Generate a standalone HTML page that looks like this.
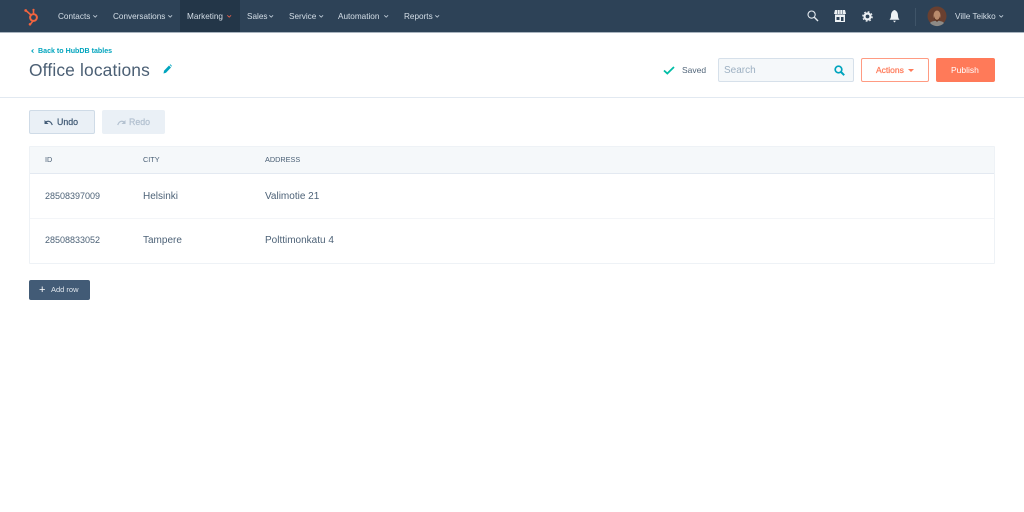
<!DOCTYPE html>
<html lang="en"><head><meta charset="utf-8"><title>Office locations</title>
<style>
html,body{margin:0;padding:0;background:#fff}
body{width:1024px;height:512px;overflow:hidden;position:relative;font-family:"Liberation Sans",sans-serif}
.a{position:absolute;box-sizing:border-box}
.t{position:absolute;white-space:nowrap;line-height:14px;filter:blur(.3px)}
.n{color:#d5dfe8;font-size:8.2px;top:9.5px}
.h{color:#4a5f75;font-size:7.3px;top:153px}
.d{color:#4d6277;font-size:10px;}
.b{-webkit-text-stroke:.25px currentColor}
svg{position:absolute;overflow:visible}
.c{top:15.3px;fill:none;stroke:#c3cfdb;stroke-width:.8}
</style></head><body>
<div class="a" style="left:0;top:0;width:1024px;height:33px;background:#2d4257;border-bottom:1px solid #a9b4bf"></div>
<div class="a" style="left:180px;top:0;width:60px;height:32px;background:#233648"></div>

<svg style="left:23px;top:8px" width="18" height="18" viewBox="0 0 18 18" fill="none" stroke="#f2643f">
<circle cx="10.5" cy="9.5" r="3.4" stroke-width="2"/><path d="M8 7 3.5 3M10.5 6V2.5M10 13l-2.5 3" stroke-width="1.6"/><circle cx="2.7" cy="2.5" r="1.4" fill="#f2643f" stroke="none"/><circle cx="10.5" cy="1.8" r="1.1" fill="#f2643f" stroke="none"/><circle cx="7" cy="16.3" r="1.3" fill="#f2643f" stroke="none"/>
</svg>

<div class="t n" style="left:58px">Contacts</div><svg class="c" style="left:93px" width="5" height="3"><path d="M.3.3 2.2 2.200 4.100.3"/></svg>
<div class="t n" style="left:113px">Conversations</div><svg class="c" style="left:168px" width="5" height="3"><path d="M.3.3 2.200 2.200 4.100.3"/></svg>
<div class="t n" style="left:187px">Marketing</div><svg class="c" style="left:227px;stroke:#e8604c" width="5" height="3"><path d="M.3.3 2.200 2.200 4.100.3"/></svg>
<div class="t n" style="left:247px">Sales</div><svg class="c" style="left:268.500px" width="5" height="3"><path d="M.3.3 2.200 2.200 4.100.3"/></svg>
<div class="t n" style="left:289px">Service</div><svg class="c" style="left:318.500px" width="5" height="3"><path d="M.3.3 2.200 2.200 4.100.3"/></svg>
<div class="t n" style="left:338px">Automation</div><svg class="c" style="left:384px" width="5" height="3"><path d="M.3.3 2.200 2.200 4.100.3"/></svg>
<div class="t n" style="left:404px">Reports</div><svg class="c" style="left:435px" width="5" height="3"><path d="M.3.3 2.200 2.200 4.100.3"/></svg>

<svg style="left:807px;top:10px" width="12" height="12" viewBox="0 0 12 12" fill="none" stroke="#e3e9ef" stroke-width="1.1"><circle cx="4.600" cy="4.600" r="3.600"/><path d="M7.300 7.300 11 11" stroke-width="1.400"/></svg>
<svg style="left:834px;top:10px" width="12" height="12" viewBox="0 0 12 12"><path d="M1 0h10l1 4H0z" fill="#eef2f5"/><path d="M1 4.500h10V12H1z" fill="#eef2f5"/><path d="M2.500 7h3v3h-3z" fill="#2d4257"/><path d="M7 7h2.500v4H7z" fill="#2d4257"/><path d="M3.500 0v4M6 0v4M8.500 0v4" stroke="#2d4257" stroke-width=".5"/></svg>
<svg style="left:862px;top:11px" width="11" height="11" viewBox="0 0 11 11" fill="none" stroke="#eef2f5"><circle cx="5.500" cy="5.500" r="3" stroke-width="2.200"/><circle cx="5.500" cy="5.500" r="4.700" stroke-width="1.200" stroke-dasharray="1.800 1.900"/></svg>
<svg style="left:889px;top:10px" width="11" height="13" viewBox="0 0 11 13"><path d="M5.500 0C3 1 2 3 2 5.500 2 7.500 1.500 8.500 0.500 9.800h10C9.500 8.500 9 7.500 9 5.500 9 3 8 1 5.500 0z" fill="#eef2f5"/><path d="M4 10.800h3L5.500 12.500z" fill="#eef2f5"/></svg>
<div class="a" style="left:915px;top:8px;width:1px;height:18px;background:#3f5468"></div>
<svg style="left:927px;top:6px" width="20" height="20" viewBox="0 0 20 20"><circle cx="10" cy="10" r="9.500" fill="#6a4030"/><path d="M3 17c2-3 12-3 14 0a9.500 9.500 0 0 1-14 0z" fill="#8d8a86"/><ellipse cx="10" cy="9.500" rx="3.500" ry="5" fill="#b98a6c"/><path d="M7 10c1 5 5 5 6 0l0 3-3 3-3-3z" fill="#5a3322"/></svg>
<div class="t n" style="left:955px">Ville Teikko</div><svg class="c" style="left:999px" width="5" height="3"><path d="M.3.3 2.200 2.200 4.100.3"/></svg>

<svg style="left:30.500px;top:48.500px;fill:none;stroke:#00a4bd;stroke-width:1" width="3" height="4"><path d="M2.500.3.800 2 2.500 3.700"/></svg>
<div class="t" style="left:38px;top:44px;color:#00a4bd;font-size:7.100px;font-weight:bold">Back to HubDB tables</div>
<div class="t" style="left:29px;top:60px;line-height:20px;color:#4b5f74;font-size:17.400px;letter-spacing:.15px">Office locations</div>
<svg style="left:163px;top:64px" width="9" height="10" viewBox="0 0 9 10"><path d="M0.500 9.500 1 6.800 6 1.500 8 3.500 3 8.800z" fill="#00a4bd"/><path d="M6.700.8 7.300.3 8.800 1.800 8.400 2.800z" fill="#00a4bd"/></svg>

<svg style="left:663px;top:66px" width="12" height="9" viewBox="0 0 12 9" fill="none" stroke="#00bda5" stroke-width="1.800"><path d="M1 4.500 4.300 7.500 11 1"/></svg>
<div class="t" style="left:682px;top:62.500px;color:#52667a;font-size:8.500px">Saved</div>
<div class="a" style="left:718px;top:58px;width:136px;height:24px;background:#f5f8fa;border:1px solid #d6e0ea;border-radius:2px"></div>
<div class="t" style="left:724px;top:63.500px;color:#9db0c2;font-size:10px">Search</div>
<svg style="left:834px;top:65px" width="11" height="11" viewBox="0 0 11 11" fill="none" stroke="#00a4bd" stroke-width="1.700"><circle cx="4.500" cy="4.500" r="3.300"/><path d="M7 7 10.200 10.200" stroke-width="2"/></svg>
<div class="a" style="left:861px;top:58px;width:68px;height:24px;background:#fff;border:1px solid #ff9b82;border-radius:2px"></div>
<div class="t b" style="left:876px;top:63px;color:#ff7a59;font-size:8.500px">Actions</div>
<div class="a" style="left:908px;top:69px;width:0;height:0;border-left:3px solid transparent;border-right:3px solid transparent;border-top:3px solid #ff7a59"></div>
<div class="a" style="left:936px;top:58px;width:59px;height:24px;background:#ff7a59;border-radius:2px"></div>
<div class="t" style="left:951px;top:63px;color:#fff;font-size:8.500px">Publish</div>

<div class="a" style="left:0;top:96.500px;width:1024px;height:1.500px;background:#e2e9f1"></div>

<div class="a" style="left:29px;top:110px;width:66px;height:24px;background:#eaf0f6;border:1px solid #cfdbe7;border-radius:2px"></div>
<svg style="left:44px;top:119px" width="9" height="7" viewBox="0 0 9 7" fill="none" stroke="#425b76" stroke-width="1.200"><path d="M1 3.500C3.500 1.500 6.500 1.500 8.300 6"/><path d="M.5 1v4h4z" fill="#425b76" stroke="none"/></svg>
<div class="t b" style="left:57px;top:114.500px;color:#425b76;font-size:8.800px">Undo</div>
<div class="a" style="left:102px;top:110px;width:63px;height:24px;background:#eaf0f6;border-radius:2px"></div>
<svg style="left:117px;top:119px" width="9" height="7" viewBox="0 0 9 7" fill="none" stroke="#b3c1d0" stroke-width="1.200"><path d="M8 3.500C5.500 1.500 2.500 1.500.7 6"/><path d="M8.500 1v4h-4z" fill="#b3c1d0" stroke="none"/></svg>
<div class="t b" style="left:129px;top:114.500px;color:#b3c1d0;font-size:8.800px">Redo</div>

<div class="a" style="left:29px;top:146px;width:966px;height:117.500px;background:#fff;border:1px solid #eef2f6;border-radius:1px"></div>
<div class="a" style="left:30px;top:147px;width:964px;height:27px;background:#f5f8fa;border-bottom:1.500px solid #e3e9f1"></div>
<div class="a" style="left:30px;top:218px;width:964px;height:1px;background:#f3f5f8"></div>

<div class="t h" style="left:45px">ID</div>
<div class="t h" style="left:143px">CITY</div>
<div class="t h" style="left:265px">ADDRESS</div>

<div class="t d" style="left:45px;top:189px;font-size:9px">28508397009</div>
<div class="t d" style="left:143px;top:189.500px">Helsinki</div>
<div class="t d" style="left:265px;top:189.500px">Valimotie 21</div>
<div class="t d" style="left:45px;top:233px;font-size:9px">28508833052</div>
<div class="t d" style="left:143px;top:234px">Tampere</div>
<div class="t d" style="left:265px;top:234px">Polttimonkatu 4</div>

<div class="a" style="left:29px;top:280px;width:61px;height:20px;background:#425b76;border-radius:2px"></div>
<div class="t" style="left:39px;top:283px;color:#fff;font-size:11px">+</div>
<div class="t" style="left:51px;top:283px;color:#dfe6ed;font-size:7.500px">Add row</div>
</body></html>
